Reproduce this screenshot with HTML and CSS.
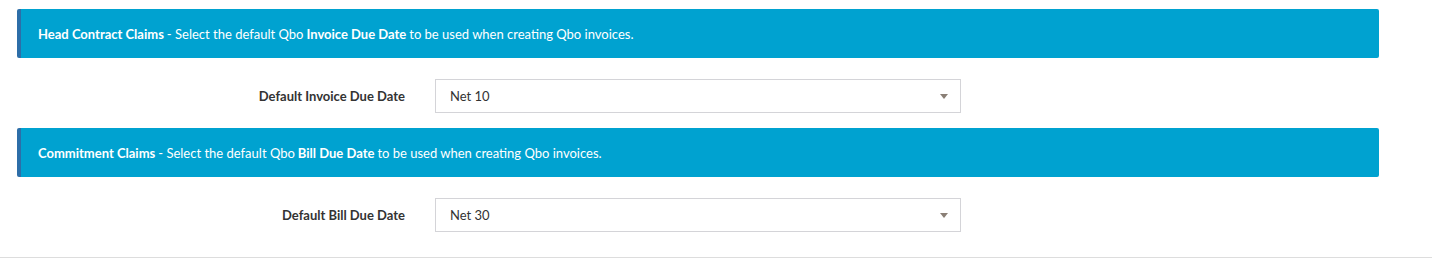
FILE: index.html
```html
<!DOCTYPE html>
<html lang="en">
    <head>
        <meta charset="UTF-8">
        <title>Qbo Settings</title>
        <link rel="stylesheet" href="styles.css">
    </head>
<body>
    <div class="settings">
        <div class="banner">
            <b>Head Contract Claims</b> - Select the default Qbo <b>Invoice Due Date</b> to be used when creating Qbo invoices.
        </div>
        <div class="row">
            <label for="invoiceDue">Default Invoice Due Date</label>
            <div class="select" id="invoiceDue">
                <span>Net 10</span>
                <span class="arrow"></span>
            </div>
        </div>

        <div class="banner">
            <b>Commitment Claims</b> - Select the default Qbo <b>Bill Due Date</b> to be used when creating Qbo invoices.
        </div>
        <div class="row">
            <label for="billDue">Default Bill Due Date</label>
            <div class="select" id="billDue">
                <span>Net 30</span>
                <span class="arrow"></span>
            </div>
        </div>
    </div>
</body>
</html>
```

FILE: styles.css
```css
body {
    margin: 0;
    font-family: Lato, "Liberation Sans", sans-serif;
    font-size: 13px;
    color: #333;
    background-color: #fff;
}
.settings {
    padding: 9px 0 10px 17px;
    border-bottom: 1px solid #ddd;
}
.banner {
    width: 1362px;
    height: 49px;
    box-sizing: border-box;
    display: flex;
    align-items: center;
    padding-left: 17px;
    background-color: #00a2d0;
    border-left: 4px solid #2d6ea8;
    border-radius: 2px;
    color: #fff;
}
.banner b {
    font-weight: 700;
    margin: 0 3px;
}
.banner b:first-child {
    margin-left: 0;
}
.row {
    display: flex;
    align-items: center;
    margin: 21px 0 15px;
}
.row label {
    width: 418px;
    padding-right: 30px;
    box-sizing: border-box;
    text-align: right;
    font-weight: 700;
    color: #333;
}
.select {
    width: 526px;
    height: 34px;
    box-sizing: border-box;
    border: 1px solid #d4d4d8;
    display: flex;
    align-items: center;
    justify-content: space-between;
    padding: 0 12px 0 14px;
    color: #333;
}
.arrow {
    width: 0;
    height: 0;
    border-left: 4px solid transparent;
    border-right: 4px solid transparent;
    border-top: 5px solid #8a7f76;
}
```
